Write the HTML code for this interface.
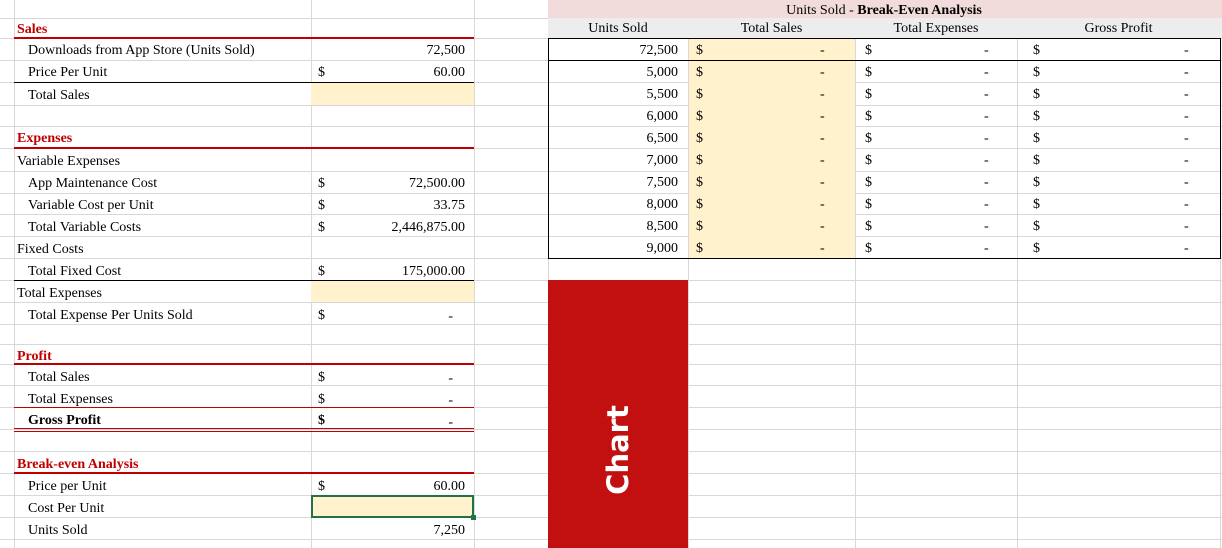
<!DOCTYPE html>
<html><head><meta charset="utf-8"><style>
*{margin:0;padding:0;box-sizing:border-box}
body{width:1222px;height:548px;overflow:hidden;background:#fff;position:relative;font-family:"Liberation Serif",serif;font-size:14px;color:#000}
.h{position:absolute;left:0;width:1222px;height:1px;background:#d8d8d8}
.v{position:absolute;top:0;height:548px;width:1px;background:#d8d8d8}
.t{position:absolute;white-space:nowrap;line-height:22px;height:22px;margin-top:2px}
.r{text-align:right}
.sec{color:#c00000;font-weight:bold}
.fill{position:absolute;background:#fff2cc}
.ln{position:absolute;height:2px;background:#c00000}
.bl{position:absolute;height:1px;background:#000}
</style></head><body>
<div class="h" style="top:18px"></div><div class="h" style="top:38px"></div><div class="h" style="top:60px"></div><div class="h" style="top:82px"></div><div class="h" style="top:105px"></div><div class="h" style="top:126px"></div><div class="h" style="top:148px"></div><div class="h" style="top:171px"></div><div class="h" style="top:193px"></div><div class="h" style="top:214px"></div><div class="h" style="top:236px"></div><div class="h" style="top:258px"></div><div class="h" style="top:280px"></div><div class="h" style="top:302px"></div><div class="h" style="top:324px"></div><div class="h" style="top:344px"></div><div class="h" style="top:364px"></div><div class="h" style="top:385px"></div><div class="h" style="top:407px"></div><div class="h" style="top:429px"></div><div class="h" style="top:451px"></div><div class="h" style="top:473px"></div><div class="h" style="top:495px"></div><div class="h" style="top:517px"></div><div class="h" style="top:539px"></div>
<div class="v" style="left:14px"></div><div class="v" style="left:311px"></div><div class="v" style="left:474px"></div><div class="v" style="left:548px"></div><div class="v" style="left:688px"></div><div class="v" style="left:855px"></div><div class="v" style="left:1017px"></div><div class="v" style="left:1220px"></div>

<div class="fill" style="left:311px;top:83px;width:163px;height:22px"></div>
<div class="fill" style="left:311px;top:281px;width:163px;height:21px"></div>
<div class="fill" style="left:311px;top:495px;width:163px;height:23px;border:2px solid #217346"></div>
<div style="position:absolute;left:471px;top:515px;width:5px;height:5px;background:#217346"></div>

<div class="ln" style="left:14px;top:37px;width:460px"></div>
<div class="bl" style="left:14px;top:82px;width:460px"></div>
<div class="ln" style="left:14px;top:147px;width:460px"></div>
<div class="bl" style="left:14px;top:280px;width:460px"></div>
<div class="ln" style="left:14px;top:363px;width:460px"></div>
<div class="bl" style="left:14px;top:407px;width:460px;background:#c00000"></div>
<div class="bl" style="left:14px;top:428px;width:460px;background:#c00000"></div>
<div class="bl" style="left:14px;top:431px;width:460px;background:#c00000"></div>
<div class="ln" style="left:14px;top:472px;width:460px"></div>

<div class="t sec" style="left:17px;top:17px">Sales</div>
<div class="t" style="left:28px;top:38px">Downloads from App Store (Units Sold)</div>
<div class="t r" style="left:311px;top:38px;width:154px">72,500</div>
<div class="t" style="left:28px;top:60px">Price Per Unit</div>
<div class="t" style="left:318px;top:60px">$</div><div class="t r" style="left:311px;top:60px;width:154px">60.00</div>
<div class="t" style="left:28px;top:83px">Total Sales</div>

<div class="t sec" style="left:17px;top:126px">Expenses</div>
<div class="t" style="left:17px;top:149px">Variable Expenses</div>
<div class="t" style="left:28px;top:171px">App Maintenance Cost</div>
<div class="t" style="left:318px;top:171px">$</div><div class="t r" style="left:311px;top:171px;width:154px">72,500.00</div>
<div class="t" style="left:28px;top:193px">Variable Cost per Unit</div>
<div class="t" style="left:318px;top:193px">$</div><div class="t r" style="left:311px;top:193px;width:154px">33.75</div>
<div class="t" style="left:28px;top:215px">Total Variable Costs</div>
<div class="t" style="left:318px;top:215px">$</div><div class="t r" style="left:311px;top:215px;width:154px">2,446,875.00</div>
<div class="t" style="left:17px;top:237px">Fixed Costs</div>
<div class="t" style="left:28px;top:259px">Total Fixed Cost</div>
<div class="t" style="left:318px;top:259px">$</div><div class="t r" style="left:311px;top:259px;width:154px">175,000.00</div>
<div class="t" style="left:17px;top:281px">Total Expenses</div>
<div class="t" style="left:28px;top:303px">Total Expense Per Units Sold</div>
<div class="t" style="left:318px;top:303px">$</div><div class="t r" style="left:311px;top:304px;width:142px">-</div>

<div class="t sec" style="left:17px;top:344px">Profit</div>
<div class="t" style="left:28px;top:365px">Total Sales</div>
<div class="t" style="left:318px;top:365px">$</div><div class="t r" style="left:311px;top:366px;width:142px">-</div>
<div class="t" style="left:28px;top:387px">Total Expenses</div>
<div class="t" style="left:318px;top:387px">$</div><div class="t r" style="left:311px;top:388px;width:142px">-</div>
<div class="t" style="left:28px;top:408px;font-weight:bold">Gross Profit</div>
<div class="t" style="left:318px;top:408px;font-weight:bold">$</div><div class="t r" style="left:311px;top:410px;width:142px">-</div>

<div class="t sec" style="left:17px;top:452px">Break-even Analysis</div>
<div class="t" style="left:28px;top:474px">Price per Unit</div>
<div class="t" style="left:318px;top:474px">$</div><div class="t r" style="left:311px;top:474px;width:154px">60.00</div>
<div class="t" style="left:28px;top:496px">Cost Per Unit</div>
<div class="t" style="left:28px;top:518px">Units Sold</div>
<div class="t r" style="left:311px;top:518px;width:154px">7,250</div>

<div style="position:absolute;left:548px;top:0;width:674px;height:18px;background:#f2dcdb"></div>
<div style="position:absolute;left:548px;top:18px;width:674px;height:20px;background:#ededed"></div>
<div class="t" style="left:548px;top:-2px;width:672px;text-align:center">Units Sold - <b>Break-Even Analysis</b></div>
<div class="t" style="left:548px;top:17px;width:140px;text-align:center;line-height:20px">Units Sold</div>
<div class="t" style="left:688px;top:17px;width:167px;text-align:center;line-height:20px">Total Sales</div>
<div class="t" style="left:855px;top:17px;width:162px;text-align:center;line-height:20px">Total Expenses</div>
<div class="t" style="left:1017px;top:17px;width:203px;text-align:center;line-height:20px">Gross Profit</div>
<div class="fill" style="left:689px;top:39px;width:166px;height:219px"></div>
<div style="position:absolute;left:548px;top:38px;width:673px;height:221px;border:1px solid #000"></div>
<div class="bl" style="left:548px;top:60px;width:673px"></div>
<div style="position:absolute;left:548px;top:38px;width:674px;line-height:22px">
<div style="height:22px;position:relative"><span class="t r" style="left:0;width:130px">72,500</span><span class="t" style="left:148px">$</span><span class="t" style="left:272px">-</span><span class="t" style="left:317px">$</span><span class="t" style="left:436px">-</span><span class="t" style="left:485px">$</span><span class="t" style="left:636px">-</span></div>
<div style="height:22px;position:relative"><span class="t r" style="left:0;width:130px">5,000</span><span class="t" style="left:148px">$</span><span class="t" style="left:272px">-</span><span class="t" style="left:317px">$</span><span class="t" style="left:436px">-</span><span class="t" style="left:485px">$</span><span class="t" style="left:636px">-</span></div>
<div style="height:22px;position:relative"><span class="t r" style="left:0;width:130px">5,500</span><span class="t" style="left:148px">$</span><span class="t" style="left:272px">-</span><span class="t" style="left:317px">$</span><span class="t" style="left:436px">-</span><span class="t" style="left:485px">$</span><span class="t" style="left:636px">-</span></div>
<div style="height:22px;position:relative"><span class="t r" style="left:0;width:130px">6,000</span><span class="t" style="left:148px">$</span><span class="t" style="left:272px">-</span><span class="t" style="left:317px">$</span><span class="t" style="left:436px">-</span><span class="t" style="left:485px">$</span><span class="t" style="left:636px">-</span></div>
<div style="height:22px;position:relative"><span class="t r" style="left:0;width:130px">6,500</span><span class="t" style="left:148px">$</span><span class="t" style="left:272px">-</span><span class="t" style="left:317px">$</span><span class="t" style="left:436px">-</span><span class="t" style="left:485px">$</span><span class="t" style="left:636px">-</span></div>
<div style="height:22px;position:relative"><span class="t r" style="left:0;width:130px">7,000</span><span class="t" style="left:148px">$</span><span class="t" style="left:272px">-</span><span class="t" style="left:317px">$</span><span class="t" style="left:436px">-</span><span class="t" style="left:485px">$</span><span class="t" style="left:636px">-</span></div>
<div style="height:22px;position:relative"><span class="t r" style="left:0;width:130px">7,500</span><span class="t" style="left:148px">$</span><span class="t" style="left:272px">-</span><span class="t" style="left:317px">$</span><span class="t" style="left:436px">-</span><span class="t" style="left:485px">$</span><span class="t" style="left:636px">-</span></div>
<div style="height:22px;position:relative"><span class="t r" style="left:0;width:130px">8,000</span><span class="t" style="left:148px">$</span><span class="t" style="left:272px">-</span><span class="t" style="left:317px">$</span><span class="t" style="left:436px">-</span><span class="t" style="left:485px">$</span><span class="t" style="left:636px">-</span></div>
<div style="height:22px;position:relative"><span class="t r" style="left:0;width:130px">8,500</span><span class="t" style="left:148px">$</span><span class="t" style="left:272px">-</span><span class="t" style="left:317px">$</span><span class="t" style="left:436px">-</span><span class="t" style="left:485px">$</span><span class="t" style="left:636px">-</span></div>
<div style="height:22px;position:relative"><span class="t r" style="left:0;width:130px">9,000</span><span class="t" style="left:148px">$</span><span class="t" style="left:272px">-</span><span class="t" style="left:317px">$</span><span class="t" style="left:436px">-</span><span class="t" style="left:485px">$</span><span class="t" style="left:636px">-</span></div>
</div>

<div style="position:absolute;left:548px;top:280px;width:140px;height:268px;background:#c21010"></div>
<div style="position:absolute;left:568px;top:432px;width:100px;height:36px;line-height:36px;text-align:center;color:#fff;font-family:'DejaVu Sans',sans-serif;font-weight:bold;font-size:29px;transform:rotate(-90deg)">Chart</div>
</body></html>
